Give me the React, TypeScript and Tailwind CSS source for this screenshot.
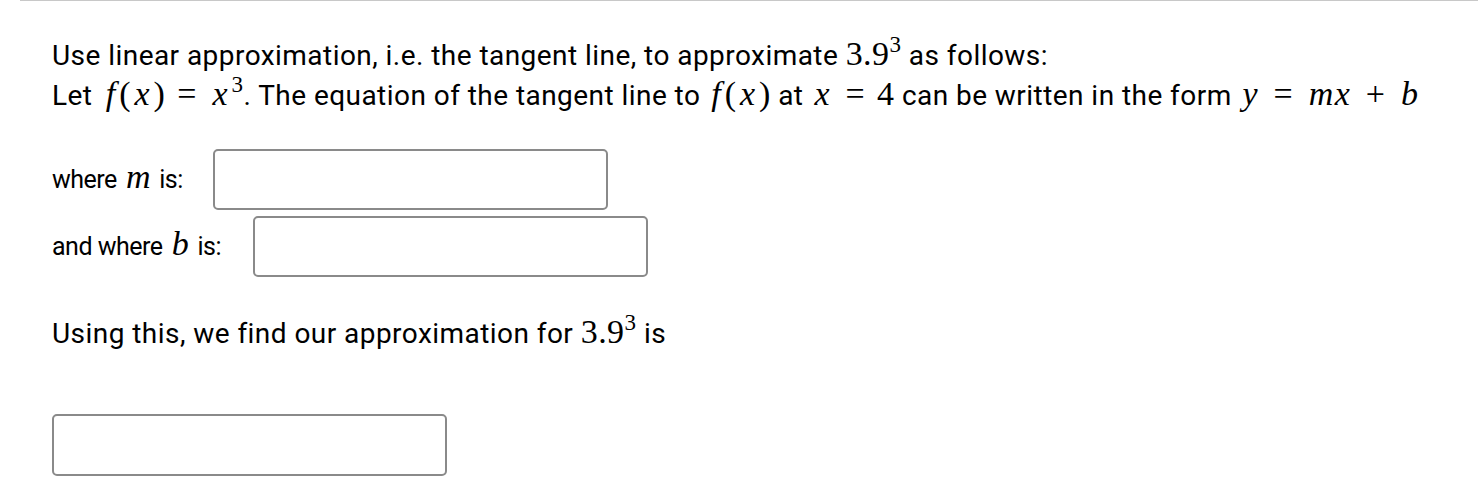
import type { ReactNode } from 'react'

function V({ children, className = 'px-[3.5px]' }: { children: ReactNode; className?: string }) {
  return (
    <span className={`font-['Liberation_Serif',serif] text-[34px] italic leading-none ${className}`}>{children}</span>
  )
}

function N({ children }: { children: ReactNode }) {
  return <span className="font-['Liberation_Serif',serif] text-[34px] leading-none">{children}</span>
}

function Sup({ children }: { children: ReactNode }) {
  return (
    <span className="relative -top-[13px] font-['Liberation_Serif',serif] text-[23px] leading-none">{children}</span>
  )
}

function Op({ children }: { children: ReactNode }) {
  return (
    <span className="mx-[12px] font-['Liberation_Serif',serif] text-[34px] leading-none">{children}</span>
  )
}

function AnswerBox({ className = '' }: { className?: string }) {
  return (
    <input
      type="text"
      className={`h-[61px] w-[395px] rounded-[5px] border-2 border-[#8a8a8a] bg-white px-3 outline-none ${className}`}
    />
  )
}

export default function App() {
  return (
    <div className="h-[490px] w-[1478px] overflow-hidden bg-white font-['Roboto',sans-serif] text-black">
      <div className="ml-5 border-t border-[#c8c8c8] pl-[32px] pt-[35px]">
        <div className="text-[28px] leading-[40px] tracking-[0.45px]">
          <p>
            Use linear approximation, i.e. the tangent line, to approximate <N>3.9</N>
            <Sup>3</Sup> as follows:
          </p>
          <p>
            Let <V className="pl-[6px] pr-[3.5px]">f</V>
            <N>(</N>
            <V>x</V>
            <N>)</N>
            <Op>=</Op>
            <V>x</V>
            <Sup>3</Sup>. The equation of the tangent line to <V>f</V>
            <N>(</N>
            <V>x</V>
            <N>)</N> at <V>x</V>
            <Op>=</Op>
            <N>4</N> can be written in the form <V>y</V>
            <Op>=</Op>
            <V className="pl-[3.5px] pr-[1px]">m</V>
            <V className="pr-[3.5px]">x</V>
            <Op>+</Op>
            <V>b</V>
          </p>
        </div>

        <div className="mt-[33px] flex flex-col gap-[6px] text-[25px] tracking-[-0.5px]">
          <div className="flex items-center">
            <span className="w-[161px] shrink-0">
              where <V>m</V> is:
            </span>
            <AnswerBox />
          </div>
          <div className="flex items-center">
            <span className="w-[201px] shrink-0">
              and where <V>b</V> is:
            </span>
            <AnswerBox />
          </div>
        </div>

        <p className="mt-[37px] text-[28px] leading-[40px] tracking-[0.45px]">
          Using this, we find our approximation for <N>3.9</N>
          <Sup>3</Sup> is
        </p>

        <AnswerBox className="mt-[60px] h-[62px]" />
      </div>
    </div>
  )
}
